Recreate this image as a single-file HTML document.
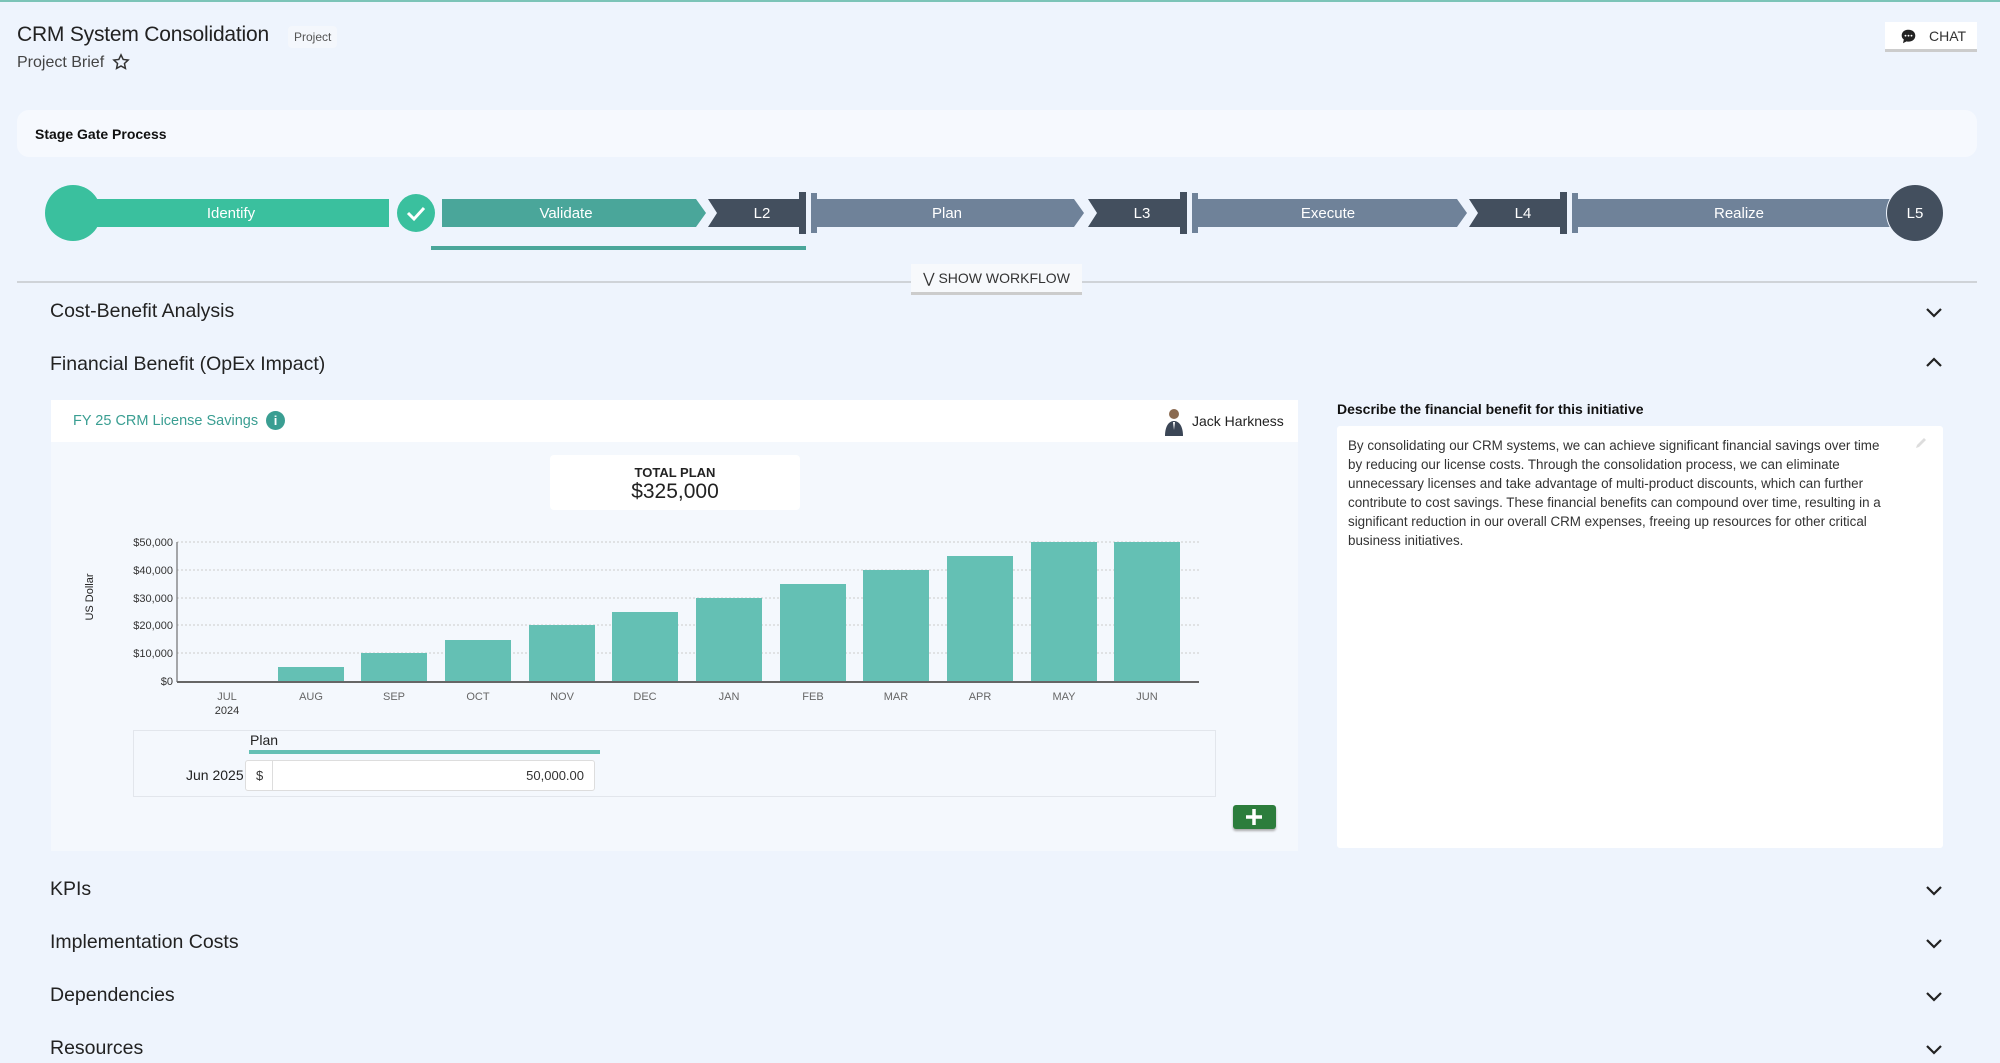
<!DOCTYPE html>
<html><head><meta charset="utf-8"><style>
*{box-sizing:border-box;margin:0;padding:0}
body{width:2000px;height:1063px;overflow:hidden;background:#eef4fd;font-family:"Liberation Sans",sans-serif;color:#222;position:relative}
.a{position:absolute}
.sec{position:absolute;left:50px;font-size:19.5px;color:#222}
.chev{position:absolute;left:1924px}
</style></head><body>
<div class="a" style="left:0;top:0;width:2000px;height:2px;background:#7cc4b8"></div>
<div class="a" style="left:17px;top:23px;font-size:21px;color:#222;letter-spacing:-0.2px">CRM System Consolidation</div>
<div class="a" style="left:288px;top:26px;padding:4px 6px;font-size:12px;color:#555;background:#f4f7fc;border-radius:4px">Project</div>
<div class="a" style="left:17px;top:54px;font-size:16px;color:#444">Project Brief</div>
<svg class="a" style="left:112px;top:53px" width="18" height="18" viewBox="0 0 24 24"><path d="M12 2.5l2.9 6.1 6.6.8-4.9 4.6 1.3 6.6L12 17.3l-5.9 3.3 1.3-6.6-4.9-4.6 6.6-.8z" fill="none" stroke="#333" stroke-width="2"/></svg>
<div class="a" style="left:1885px;top:22px;width:92px;height:30px;background:#fff;border-bottom:3px solid #ccc;font-size:14px;color:#333;line-height:28px;padding-left:44px">CHAT</div>
<svg class="a" style="left:1900px;top:28px" width="17" height="17" viewBox="0 0 20 20"><path d="M10 2C5 2 2 5 2 9c0 2 1 3.5 2.5 4.6L3.5 18l4.2-2.3c.7.2 1.5.3 2.3.3 5 0 8-3 8-7s-3-7-8-7z" fill="#222"/><circle cx="6.5" cy="9" r="1.1" fill="#fff"/><circle cx="10" cy="9" r="1.1" fill="#fff"/><circle cx="13.5" cy="9" r="1.1" fill="#fff"/></svg>

<div class="a" style="left:17px;top:110px;width:1960px;height:47px;background:#f6f9fe;border-radius:12px"></div>
<div class="a" style="left:35px;top:126px;font-size:14px;font-weight:bold;color:#111">Stage Gate Process</div>

<svg class="a" style="left:0;top:180px" width="2000" height="70" viewBox="0 180 2000 70" font-family="Liberation Sans" font-size="15" fill="#fff" text-anchor="middle">
<rect x="73" y="199" width="316" height="28" fill="#3ac09e"/>
<circle cx="73" cy="213" r="28" fill="#3ac09e"/>
<text x="231" y="218" fill="#fff">Identify</text>
<circle cx="416" cy="213" r="21" fill="#eef4fd"/>
<circle cx="416" cy="213" r="19" fill="#3ac09e"/>
<path d="M408 213l6 6 10-11" stroke="#fff" stroke-width="3" fill="none"/>
<polygon points="442,199 696,199 706,213 696,227 442,227" fill="#4aa69a"/>
<text x="566" y="218">Validate</text>
<polygon points="708,199 801,199 801,227 708,227 717,213" fill="#434f5e"/>
<text x="762" y="218">L2</text>
<rect x="799" y="192" width="7" height="42" fill="#434f5e"/>
<rect x="811" y="193" width="6" height="40" fill="#6f8299"/>
<polygon points="817,199 1074,199 1084,213 1074,227 817,227" fill="#6f8299"/>
<text x="947" y="218">Plan</text>
<polygon points="1088,199 1181,199 1181,227 1088,227 1097,213" fill="#434f5e"/>
<text x="1142" y="218">L3</text>
<rect x="1180" y="192" width="7" height="42" fill="#434f5e"/>
<rect x="1192" y="193" width="6" height="40" fill="#6f8299"/>
<polygon points="1198,199 1457,199 1467,213 1457,227 1198,227" fill="#6f8299"/>
<text x="1328" y="218">Execute</text>
<polygon points="1469,199 1561,199 1561,227 1469,227 1478,213" fill="#434f5e"/>
<text x="1523" y="218">L4</text>
<rect x="1560" y="192" width="7" height="42" fill="#434f5e"/>
<rect x="1572" y="193" width="6" height="40" fill="#6f8299"/>
<rect x="1578" y="199" width="312" height="28" fill="#6f8299"/>
<text x="1739" y="218">Realize</text>
<circle cx="1915" cy="213" r="29" fill="#eef4fd"/>
<circle cx="1915" cy="213" r="28" fill="#434f5e"/>
<text x="1915" y="218">L5</text>
<rect x="431" y="246" width="375" height="4" fill="#4aa69a"/>
</svg>

<div class="a" style="left:17px;top:281px;width:1960px;height:2px;background:#cfd3d8"></div>
<div class="a" style="left:911px;top:264px;width:171px;height:31px;background:#f7f9fc;border-bottom:3px solid #ccc;font-size:14px;color:#333;line-height:29px;text-align:center">&#8897; SHOW WORKFLOW</div>

<div class="sec" style="top:300px">Cost-Benefit Analysis</div>
<div class="sec" style="top:353px">Financial Benefit (OpEx Impact)</div>
<div class="sec" style="top:878px">KPIs</div>
<div class="sec" style="top:931px">Implementation Costs</div>
<div class="sec" style="top:984px">Dependencies</div>
<div class="sec" style="top:1037px">Resources</div>
<svg class="chev" style="top:302px" width="20" height="20"><path d="M3 7l7 7 7-7" stroke="#222" stroke-width="2.2" fill="none"/></svg>
<svg class="chev" style="top:352px" width="20" height="20"><path d="M3 14l7-7 7 7" stroke="#222" stroke-width="2.2" fill="none"/></svg>
<svg class="chev" style="top:880px" width="20" height="20"><path d="M3 7l7 7 7-7" stroke="#222" stroke-width="2.2" fill="none"/></svg>
<svg class="chev" style="top:933px" width="20" height="20"><path d="M3 7l7 7 7-7" stroke="#222" stroke-width="2.2" fill="none"/></svg>
<svg class="chev" style="top:986px" width="20" height="20"><path d="M3 7l7 7 7-7" stroke="#222" stroke-width="2.2" fill="none"/></svg>
<svg class="chev" style="top:1039px" width="20" height="20"><path d="M3 7l7 7 7-7" stroke="#222" stroke-width="2.2" fill="none"/></svg>

<div class="a" style="left:51px;top:400px;width:1247px;height:451px;background:#f4f8fd"></div>
<div class="a" style="left:51px;top:400px;width:1247px;height:42px;background:#fff"></div>
<div class="a" style="left:73px;top:413px;font-size:14.5px;color:#3a9e92">FY 25 CRM License Savings</div>
<div class="a" style="left:266px;top:411px;width:19px;height:19px;border-radius:50%;background:#3a9e92;color:#fff;font-size:13px;font-weight:bold;text-align:center;line-height:19px">i</div>
<svg class="a" style="left:1163px;top:407px" width="22" height="29" viewBox="0 0 22 29"><circle cx="11" cy="7" r="5" fill="#8a6a50"/><path d="M2 29c0-10 4-15 9-15s9 5 9 15z" fill="#3b4656"/><path d="M10 15l1 8 1-8z" fill="#fff"/></svg>
<div class="a" style="left:1192px;top:413px;font-size:14px;color:#222">Jack Harkness</div>

<div class="a" style="left:550px;top:455px;width:250px;height:55px;background:#fff;border-radius:4px;text-align:center">
<div style="font-size:13px;font-weight:bold;margin-top:10px;color:#222">TOTAL PLAN</div>
<div style="font-size:21px;color:#222">$325,000</div></div>

<svg class="a" style="left:51px;top:520px" width="1200" height="210" viewBox="51 520 1200 210" font-family="Liberation Sans" font-size="11" fill="#444">
<text transform="translate(93,597) rotate(-90)" text-anchor="middle" font-size="11" fill="#222">US Dollar</text>
<g stroke="#ccc" stroke-dasharray="2,2">
<line x1="177" y1="542" x2="1199" y2="542"/><line x1="177" y1="570" x2="1199" y2="570"/><line x1="177" y1="598" x2="1199" y2="598"/><line x1="177" y1="625" x2="1199" y2="625"/><line x1="177" y1="653" x2="1199" y2="653"/></g>
<g text-anchor="end" fill="#333"><text x="173" y="546">$50,000</text><text x="173" y="574">$40,000</text><text x="173" y="602">$30,000</text><text x="173" y="629">$20,000</text><text x="173" y="657">$10,000</text><text x="173" y="685">$0</text></g>
<g fill="#64c0b4">
<rect x="278" y="667" width="66" height="14"/><rect x="361" y="653" width="66" height="28"/><rect x="445" y="640" width="66" height="41"/><rect x="529" y="625" width="66" height="56"/><rect x="612" y="612" width="66" height="69"/><rect x="696" y="598" width="66" height="83"/><rect x="780" y="584" width="66" height="97"/><rect x="863" y="570" width="66" height="111"/><rect x="947" y="556" width="66" height="125"/><rect x="1031" y="542" width="66" height="139"/><rect x="1114" y="542" width="66" height="139"/></g>
<line x1="177" y1="542" x2="177" y2="682" stroke="#555"/>
<line x1="177" y1="682" x2="1199" y2="682" stroke="#666" stroke-width="2"/>
<g text-anchor="middle" fill="#666"><text x="227" y="700">JUL</text><text x="227" y="714" fill="#333">2024</text><text x="311" y="700">AUG</text><text x="394" y="700">SEP</text><text x="478" y="700">OCT</text><text x="562" y="700">NOV</text><text x="645" y="700">DEC</text><text x="729" y="700">JAN</text><text x="813" y="700">FEB</text><text x="896" y="700">MAR</text><text x="980" y="700">APR</text><text x="1064" y="700">MAY</text><text x="1147" y="700">JUN</text></g>
</svg>

<div class="a" style="left:133px;top:730px;width:1083px;height:67px;border:1px solid #e2e6ec"></div>
<div class="a" style="left:250px;top:732px;font-size:14px;color:#222">Plan</div>
<div class="a" style="left:249px;top:750px;width:351px;height:4px;background:#64c0b4"></div>
<div class="a" style="left:186px;top:767px;font-size:14px;color:#222">Jun 2025</div>
<div class="a" style="left:245px;top:760px;width:350px;height:31px;background:#fff;border:1px solid #ddd;border-radius:3px;font-size:13px;color:#333">
<span style="position:absolute;left:10px;top:7px">$</span><span style="position:absolute;left:26px;top:0;width:1px;height:29px;background:#ddd"></span><span style="position:absolute;right:10px;top:7px">50,000.00</span></div>
<div class="a" style="left:1233px;top:805px;width:43px;height:24px;background:#2c7d3c;border-radius:3px;box-shadow:0 2px 2px #aaa"></div>
<svg class="a" style="left:1242px;top:805px" width="24" height="24"><path d="M12 4v16M4 12h16" stroke="#fff" stroke-width="3.5"/></svg>

<div class="a" style="left:1337px;top:401px;font-size:14px;font-weight:bold;color:#111">Describe the financial benefit for this initiative</div>
<div class="a" style="left:1337px;top:426px;width:606px;height:422px;background:#fff;border-radius:3px;padding:10px 10px 0 11px;font-size:13.4px;line-height:19px;color:#333;white-space:nowrap">By consolidating our CRM systems, we can achieve significant financial savings over time<br>by reducing our license costs. Through the consolidation process, we can eliminate<br>unnecessary licenses and take advantage of multi-product discounts, which can further<br>contribute to cost savings. These financial benefits can compound over time, resulting in a<br>significant reduction in our overall CRM expenses, freeing up resources for other critical<br>business initiatives.</div>
<svg class="a" style="left:1914px;top:436px" width="14" height="14"><path d="M2 12l1-3 7-7 2 2-7 7z" fill="#ddd"/></svg>
</body></html>
